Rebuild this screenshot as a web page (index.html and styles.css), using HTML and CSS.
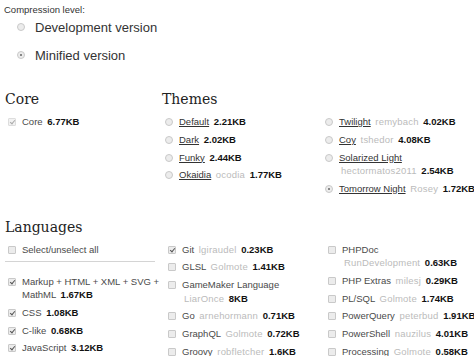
FILE: index.html
```html
<!DOCTYPE html>
<html lang="en">
<head>
    <meta charset="UTF-8">
    <meta name="viewport" content="width=device-width, initial-scale=1.0">
    <title>Download Prism</title>
    <link rel="stylesheet" href="styles.css">
</head>
<body>

    <div class="page">
        <section class="compression">
            <p class="compression-label">Compression level:</p>
            <label class="option"><input type="radio" name="compression"> Development version</label>
            <label class="option"><input type="radio" name="compression" checked> Minified version</label>
        </section>

        <div class="top-row">
            <section class="core">
                <h2>Core</h2>
                <ul class="items">
                    <li><input type="checkbox" checked disabled><span class="text">Core <strong>6.77KB</strong></span></li>
                </ul>
            </section>

            <section class="themes">
                <h2>Themes</h2>
                <div class="cols">
                    <ul class="items">
                        <li><input type="radio" name="theme"><span class="text"><a href="#">Default</a> <strong>2.21KB</strong></span></li>
                        <li><input type="radio" name="theme"><span class="text"><a href="#">Dark</a> <strong>2.02KB</strong></span></li>
                        <li><input type="radio" name="theme"><span class="text"><a href="#">Funky</a> <strong>2.44KB</strong></span></li>
                        <li><input type="radio" name="theme"><span class="text"><a href="#">Okaidia</a> <span class="meta"><span class="author">ocodia</span> <strong>1.77KB</strong></span></span></li>
                    </ul>
                    <ul class="items">
                        <li><input type="radio" name="theme"><span class="text"><a href="#">Twilight</a> <span class="meta"><span class="author">remybach</span> <strong>4.02KB</strong></span></span></li>
                        <li><input type="radio" name="theme"><span class="text"><a href="#">Coy</a> <span class="meta"><span class="author">tshedor</span> <strong>4.08KB</strong></span></span></li>
                        <li><input type="radio" name="theme"><span class="text"><a href="#">Solarized Light</a> <span class="meta"><span class="author">hectormatos2011</span> <strong>2.54KB</strong></span></span></li>
                        <li><input type="radio" name="theme" checked><span class="text"><a href="#">Tomorrow Night</a> <span class="meta"><span class="author">Rosey</span> <strong>1.72KB</strong></span></span></li>
                    </ul>
                </div>
            </section>
        </div>

        <section class="languages">
            <h2>Languages</h2>
            <div class="cols">
                <ul class="items">
                    <li><input type="checkbox"><span class="text">Select/unselect all</span></li>
                    <li class="divider"><hr></li>
                    <li><input type="checkbox" checked><span class="text">Markup + HTML + XML + SVG + MathML <strong>1.67KB</strong></span></li>
                    <li><input type="checkbox" checked><span class="text">CSS <strong>1.08KB</strong></span></li>
                    <li><input type="checkbox" checked><span class="text">C-like <strong>0.68KB</strong></span></li>
                    <li><input type="checkbox" checked><span class="text">JavaScript <strong>3.12KB</strong></span></li>
                    <li><input type="checkbox"><span class="text">ABAP <span class="meta"><span class="author">dellagustin</span> <strong>1.32KB</strong></span></span></li>
                </ul>
                <ul class="items">
                    <li><input type="checkbox" checked><span class="text">Git <span class="meta"><span class="author">lgiraudel</span> <strong>0.23KB</strong></span></span></li>
                    <li><input type="checkbox"><span class="text">GLSL <span class="meta"><span class="author">Golmote</span> <strong>1.41KB</strong></span></span></li>
                    <li><input type="checkbox"><span class="text">GameMaker Language <span class="meta"><span class="author">LiarOnce</span> <strong>8KB</strong></span></span></li>
                    <li><input type="checkbox"><span class="text">Go <span class="meta"><span class="author">arnehormann</span> <strong>0.71KB</strong></span></span></li>
                    <li><input type="checkbox"><span class="text">GraphQL <span class="meta"><span class="author">Golmote</span> <strong>0.72KB</strong></span></span></li>
                    <li><input type="checkbox"><span class="text">Groovy <span class="meta"><span class="author">robfletcher</span> <strong>1.6KB</strong></span></span></li>
                    <li><input type="checkbox"><span class="text">Haml <span class="meta"><span class="author">Golmote</span> <strong>1.95KB</strong></span></span></li>
                </ul>
                <ul class="items">
                    <li><input type="checkbox"><span class="text">PHPDoc <span class="meta"><span class="author">RunDevelopment</span> <strong>0.63KB</strong></span></span></li>
                    <li><input type="checkbox"><span class="text">PHP Extras <span class="meta"><span class="author">milesj</span> <strong>0.29KB</strong></span></span></li>
                    <li><input type="checkbox"><span class="text">PL/SQL <span class="meta"><span class="author">Golmote</span> <strong>1.74KB</strong></span></span></li>
                    <li><input type="checkbox"><span class="text">PowerQuery <span class="meta"><span class="author">peterbud</span> <strong>1.91KB</strong></span></span></li>
                    <li><input type="checkbox"><span class="text">PowerShell <span class="meta"><span class="author">nauzilus</span> <strong>4.01KB</strong></span></span></li>
                    <li><input type="checkbox"><span class="text">Processing <span class="meta"><span class="author">Golmote</span> <strong>0.58KB</strong></span></span></li>
                    <li><input type="checkbox"><span class="text">Prolog <span class="meta"><span class="author">Golmote</span> <strong>0.6KB</strong></span></span></li>
                </ul>
            </div>
        </section>
    </div>

</body>
</html>
```

FILE: styles.css
```css
body {
    margin: 0;
    font-family: "Liberation Sans", Arial, sans-serif;
    color: #4a4a4a;
    background: #fff;
    overflow: hidden;
}

.page {
    padding: 4px 0 0 4px;
}

.compression-label {
    margin: 0;
    font-size: 9.5px;
    line-height: 12px;
    color: #333;
}

.option {
    display: flex;
    align-items: center;
    height: 20px;
    margin-top: 1px;
    padding-left: 13px;
    font-size: 13px;
    color: #333;
}

.option + .option {
    margin-top: 8px;
}

h2 {
    margin: 0 0 6px;
    font-family: "DejaVu Serif", Georgia, serif;
    font-weight: normal;
    font-size: 14px;
    line-height: 20px;
    color: #222;
}

.top-row {
    display: flex;
    margin-top: 24px;
}

.core {
    width: 158px;
    flex: none;
    padding-left: 1px;
    box-sizing: border-box;
}

.cols {
    display: flex;
}

.cols ul {
    width: 160px;
    flex: none;
}

.languages {
    margin-top: 17px;
    padding-left: 1px;
}

.items {
    list-style: none;
    margin: 0;
    padding: 0;
}

.items li {
    display: flex;
    align-items: flex-start;
    padding-left: 3px;
    margin-bottom: 4.25px;
    font-size: 9.5px;
    line-height: 13.5px;
}

.items li .text {
    flex: 1;
}

.items li.divider {
    display: block;
    padding: 0;
    margin: 0;
    width: 150px;
}

hr {
    margin: 4.5px 0 13px;
    border: 0;
    border-top: 1px solid #d4d4d4;
}

.items a {
    color: #333;
}

.meta {
    white-space: nowrap;
}

.author {
    margin-left: 2px;
    letter-spacing: 0.2px;
    color: #bbb;
}

strong {
    margin-left: 2px;
    color: #111;
}

input[type="checkbox"],
input[type="radio"] {
    appearance: none;
    -webkit-appearance: none;
    box-sizing: border-box;
    position: relative;
    flex: none;
    width: 8px;
    height: 8px;
    margin: 3px 6px 0 0;
    border: 1px solid #c9c9c9;
    background: #ececec;
}

input[type="checkbox"] {
    border-radius: 1px;
}

input[type="radio"] {
    border-radius: 50%;
}

input[type="checkbox"]:checked::after {
    content: "";
    position: absolute;
    left: 2px;
    top: 0;
    width: 2px;
    height: 4px;
    border: solid #555;
    border-width: 0 1px 1px 0;
    transform: rotate(40deg);
}

input[type="checkbox"]:disabled {
    border-color: #ddd;
    background: #f2f2f2;
}

input[type="checkbox"]:disabled::after {
    border-color: #aaa;
}

input[type="radio"]:checked::after {
    content: "";
    position: absolute;
    left: 2px;
    top: 2px;
    width: 2px;
    height: 2px;
    border-radius: 50%;
    background: #666;
}

.option input[type="radio"] {
    width: 8px;
    height: 8px;
    margin: 0 10px 0 0;
}
```
